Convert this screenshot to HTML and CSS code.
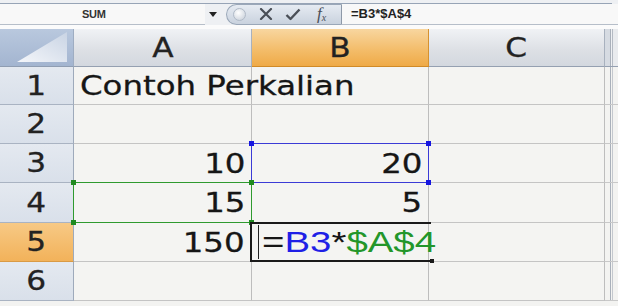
FILE: index.html
```html
<!DOCTYPE html>
<html lang="id">
<head>
    <meta charset="UTF-8">
    <title>Contoh Perkalian</title>
    <link rel="stylesheet" href="styles.css">
</head>
<body>
    <div class="fbar">
        <div class="namebox">SUM</div>
        <svg class="drop" width="8" height="5" viewBox="0 0 8 5"><polygon points="0,0 8,0 4,5" fill="#222"/></svg>
        <div class="pill">
            <span class="dot"></span>
            <svg class="ico" width="14" height="12" viewBox="0 0 14 12"><path d="M2 1 L12 11 M12 1 L2 11" stroke="#4a4f57" stroke-width="2.2" stroke-linecap="round"/></svg>
            <svg class="ico" width="16" height="13" viewBox="0 0 16 13"><path d="M1.5 7 L5.5 11 L14.5 1.5" stroke="#4a4f57" stroke-width="2.4" fill="none" stroke-linejoin="round"/></svg>
            <span class="fx">f<sub>x</sub></span>
        </div>
        <div class="ftext">=B3*$A$4</div>
    </div>

    <div class="sheet">
        <!-- header -->
        <div class="corner">
            <svg width="50" height="30" viewBox="0 0 50 30"><defs><linearGradient id="tri" x1="0" y1="1" x2="1" y2="0"><stop offset="0" stop-color="#f4f6fa"/><stop offset="1" stop-color="#c9d4e4"/></linearGradient></defs><polygon points="0,30 50,0 50,30" fill="url(#tri)"/></svg>
        </div>
        <div class="colh"><span class="t">A</span></div>
        <div class="colh sel"><span class="t">B</span></div>
        <div class="colh"><span class="t">C</span></div>
        <div class="edge head"></div>

        <div class="rowh"><span class="t">1</span></div>
        <div class="cell title"><span class="t">Contoh Perkalian</span></div>
        <div class="cell"></div>
        <div class="cell"></div>
        <div class="edge"></div>

        <div class="rowh"><span class="t">2</span></div>
        <div class="cell"></div>
        <div class="cell"></div>
        <div class="cell"></div>
        <div class="edge"></div>

        <div class="rowh"><span class="t">3</span></div>
        <div class="cell num"><span class="t">10</span></div>
        <div class="cell num ref"><span class="t">20</span>
            <span class="box blue"><i class="h tl"></i><i class="h tr"></i><i class="h bl"></i><i class="h br"></i></span>
        </div>
        <div class="cell"></div>
        <div class="edge"></div>

        <div class="rowh"><span class="t">4</span></div>
        <div class="cell num ref"><span class="t">15</span>
            <span class="box green"><i class="h tl"></i><i class="h tr"></i><i class="h bl"></i><i class="h br"></i></span>
        </div>
        <div class="cell num"><span class="t">5</span></div>
        <div class="cell"></div>
        <div class="edge"></div>

        <div class="rowh sel"><span class="t">5</span></div>
        <div class="cell num"><span class="t">150</span></div>
        <div class="cell active">
            <span class="caret"></span><span class="formula">=<b class="fb">B3</b>*<b class="fg">$A$4</b></span>
            <span class="box black"><i class="h br"></i></span>
        </div>
        <div class="cell"></div>
        <div class="edge"></div>

        <div class="rowh"><span class="t">6</span></div>
        <div class="cell"></div>
        <div class="cell"></div>
        <div class="cell"></div>
        <div class="edge"></div>
    </div>
</body>
</html>
```

FILE: styles.css
```css
*{
    margin: 0;
    padding: 0;
    box-sizing: border-box;
}
body{
    width: 618px;
    height: 306px;
    overflow: hidden;
    background: #f3f3f1;
    font-family: "DejaVu Sans", Verdana, sans-serif;
    color: #161616;
}

/* formula bar */
.fbar{
    height: 29px;
    padding-top: 3px;
    border-bottom: 4px solid #fbfbfb;
    background: #eef0f3;
    display: flex;
    align-items: center;
    position: relative;
}
.fbar::before{
    content: '';
    position: absolute;
    left: 0; right: 6px; top: 3px;
    border-top: 1px solid #97a4b6;
}
.fbar > *{
    height: 21px;
}
.namebox{
    width: 205px;
    padding-left: 82px;
    background: #f8f8f8;
    border-bottom: 1px solid #b6bec9;
    font-family: "Liberation Sans", Arial, sans-serif;
    font-size: 11px;
    font-weight: bold;
    color: #333;
    letter-spacing: -0.3px;
    display: flex;
    align-items: center;
}
.fbar .drop{
    height: 5px;
    margin: 0 9px 0 4px;
}
.pill{
    width: 116px;
    background: linear-gradient(#e6ebf2, #c9d2de);
    border: 1px solid #9aa7b8;
    border-right: 1px solid #8e99a8;
    border-radius: 11px 0 0 11px;
    display: flex;
    align-items: center;
    padding-left: 6px;
}
.dot{
    width: 13px;
    height: 13px;
    border-radius: 50%;
    background: radial-gradient(circle at 40% 35%, #fff, #c3cbd6);
    border: 1px solid #b0bac7;
    margin-right: 13px;
}
.ico{
    margin-right: 12px;
}
.fx{
    font-family: "Liberation Serif", "Times New Roman", serif;
    font-style: italic;
    font-size: 17px;
    color: #4a4f57;
    line-height: 1;
    margin-left: 4px;
}
.fx sub{
    font-size: 10px;
    vertical-align: -2px;
}
.ftext{
    flex: 1;
    background: #f8f8f8;
    border-bottom: 1px solid #b6bec9;
    padding-left: 9px;
    font-family: "Liberation Sans", Arial, sans-serif;
    font-size: 13px;
    font-weight: bold;
    color: #222;
    display: flex;
    align-items: center;
}

/* sheet */
.sheet{
    display: grid;
    grid-template-columns: 74px 178px 177px 176px 13px;
    grid-template-rows: 38px 38px 39px 39px 40px 39px 39px;
}
.t{
    display: inline-block;
    transform: scaleX(1.2);
    -webkit-text-stroke: 0.3px currentColor;
}
.corner{
    background: linear-gradient(#b9c8de, #a3b5d0);
    border-right: 1px solid #9eadc2;
    border-bottom: 1px solid #8f9db2;
    display: flex;
    align-items: flex-end;
    justify-content: flex-end;
    padding: 0 6px 4px 0;
}
.colh{
    background: linear-gradient(#f0f2f5, #dcdfe4 60%, #d3d8df);
    border-right: 1px solid #a8b1be;
    border-bottom: 1px solid #95a0b1;
    display: flex;
    align-items: center;
    justify-content: center;
    font-size: 26px;
    color: #222;
}
.colh.sel{
    background: linear-gradient(#f8d69f, #f3bb67 60%, #efaa47);
    border-right-color: #d6922f;
    border-bottom-color: #d08a28;
}
.rowh{
    background: linear-gradient(#e4e9f0, #d9e0ea);
    border-right: 1px solid #9eaabb;
    border-bottom: 1px solid #a9b3c2;
    display: flex;
    align-items: center;
    justify-content: center;
    font-size: 26px;
    color: #222;
}
.rowh.sel{
    background: linear-gradient(#f7c985, #f2b25a);
    border-bottom-color: #d99a45;
}
.cell{
    background: #f4f4f2;
    border-right: 1px solid #bdbdbd;
    border-bottom: 1px solid #c4c4c4;
    display: flex;
    align-items: center;
    font-size: 27px;
    white-space: nowrap;
    padding: 0 6px;
}
.title{
    padding-left: 6px;
    position: relative;
    z-index: 1;
}
.title .t{
    transform-origin: left center;
}
.num{
    justify-content: flex-end;
}
.num .t{
    transform-origin: right center;
}
.edge{
    background: linear-gradient(to right, #f3f3f1 5px, #a9b0ba 5px, #a9b0ba 6px, #f3f3f1 6px, #f3f3f1 7px, #c4c8ce 7px, #c4c8ce 8px, #f3f3f1 8px);
    border-bottom: 1px solid #c8c8c8;
}
.edge.head{
    background: linear-gradient(to right, #d6dbe2 5px, #a9b0ba 5px, #a9b0ba 6px, #eef0f3 6px, #eef0f3 7px, #b4bac3 7px, #b4bac3 8px, #e9ebee 8px);
    border-bottom-color: #95a0b1;
}

/* reference boxes */
.ref, .active{
    position: relative;
}
.box{
    position: absolute;
    left: -1px; top: -1px; right: -1px; bottom: -1px;
    pointer-events: none;
}
.box.blue{ border: 1px solid #3b3bd6; }
.box.green{ border: 1px solid #2f9a2f; }
.box.black{
    left: -2px; top: -1px; right: -3px; bottom: -1px;
    border: 2px solid #1a1a1a;
    border-right: 0;
}
.h{
    position: absolute;
    width: 5px;
    height: 5px;
}
.blue .h{ background: #1515e0; }
.green .h{ background: #1f8a1f; }
.black .h{ background: #1a1a1a; width: 4px; height: 4px; }
.tl{ left: -3px; top: -3px; }
.tr{ right: -3px; top: -3px; }
.bl{ left: -3px; bottom: -3px; }
.br{ right: -3px; bottom: -3px; }

.active{
    padding-left: 6px;
    z-index: 2;
}
.caret{
    width: 1px;
    height: 34px;
    background: #222;
    margin-right: 3px;
}
.formula{
    font-family: "Liberation Sans", Arial, sans-serif;
    font-size: 30px;
    display: inline-block;
    transform: scaleX(1.28);
    transform-origin: left center;
    color: #161616;
}
.formula b{
    font-weight: normal;
}
.fb{ color: #1f1fe6; }
.fg{ color: #23962a; }
```
